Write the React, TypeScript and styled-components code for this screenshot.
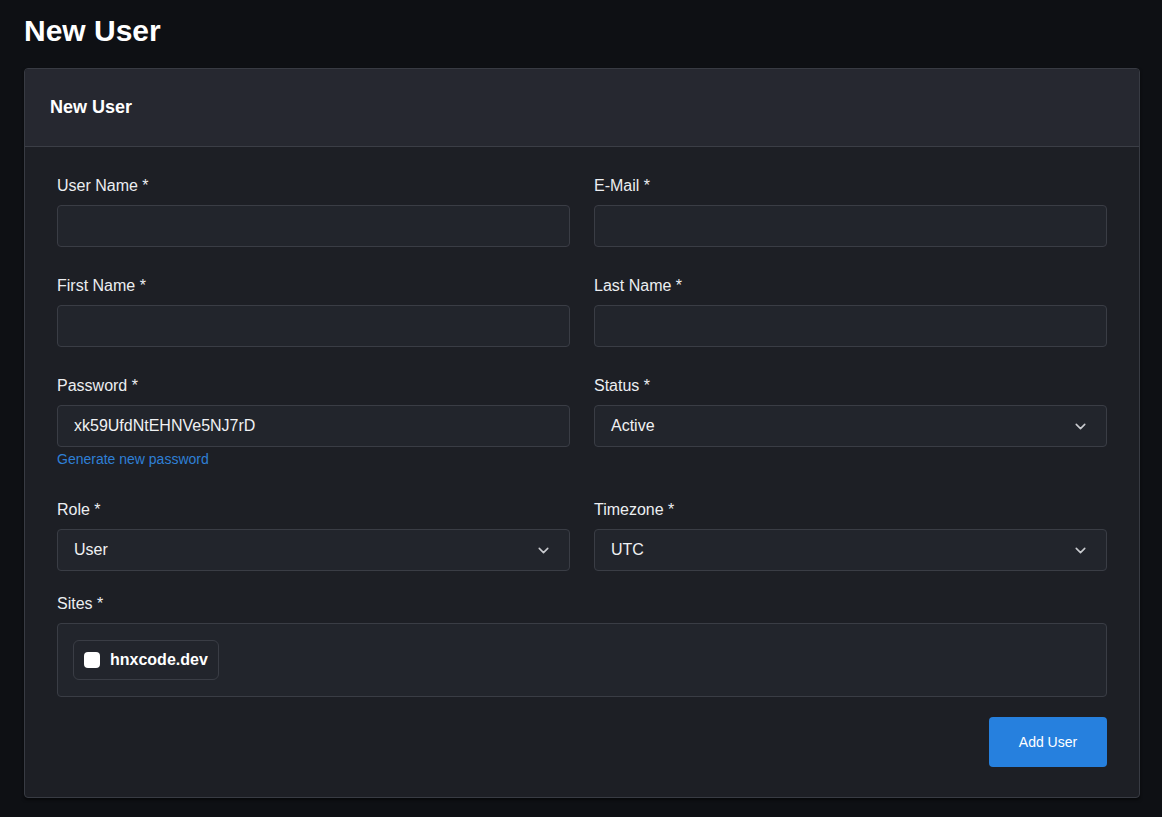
import React, { useState } from "react";
import styled, { createGlobalStyle } from "styled-components";
import { ChevronDown } from "lucide-react";

const GlobalStyle = createGlobalStyle`
  html, body {
    margin: 0;
    padding: 0;
    background: #0e1014;
    font-family: "Liberation Sans", Arial, sans-serif;
    color: #f2f3f5;
  }
  * { box-sizing: border-box; }
`;

const Page = styled.div`
  padding: 14px 22px 20px 24px;
  min-height: 817px;
`;

const Title = styled.h1`
  margin: 0 0 20px;
  font-size: 30px;
  line-height: 34px;
  font-weight: 700;
  color: #ffffff;
`;

const Card = styled.section`
  border: 1px solid #383b43;
  border-radius: 4px;
  background: #1d1f25;
  overflow: hidden;
  box-shadow: 0 2px 3px rgba(0, 0, 0, 0.5);
`;

const CardHeader = styled.header`
  background: #262830;
  border-bottom: 1px solid #3b3e46;
  padding: 27px 25px 28px;
  font-size: 18px;
  line-height: 22px;
  font-weight: 700;
  color: #ffffff;
`;

const CardBody = styled.form`
  padding: 29px 32px 30px;
`;

const Grid = styled.div`
  display: grid;
  grid-template-columns: 1fr 1fr;
  column-gap: 24px;
  row-gap: 29px;
`;

const Field = styled.div<{ $wide?: boolean }>`
  display: flex;
  flex-direction: column;
  grid-column: ${(p) => (p.$wide ? "1 / -1" : "auto")};
`;

const Label = styled.label`
  font-size: 16px;
  line-height: 20px;
  color: #eceef1;
  margin-bottom: 9px;
`;

const Input = styled.input`
  height: 42px;
  width: 100%;
  padding: 0 16px;
  background: #22252c;
  border: 1px solid #3a3d45;
  border-radius: 4px;
  color: #f0f1f3;
  font-family: inherit;
  font-size: 16px;
  outline: none;
`;

const SelectWrap = styled.div`
  position: relative;
  height: 42px;
  background: #22252c;
  border: 1px solid #3a3d45;
  border-radius: 4px;
  display: flex;
  align-items: center;
  padding: 0 16px;
  font-size: 16px;
  color: #f0f1f3;

  & svg {
    position: absolute;
    right: 17px;
    top: 12px;
    color: #c9cbcf;
  }
`;

const HelpLink = styled.a`
  margin-top: 1px;
  font-size: 14px;
  line-height: 23px;
  color: #2f7fd6;
  text-decoration: none;
  cursor: pointer;
`;

const SitesField = styled(Field)`
  margin-top: -6px;
`;

const SitesBox = styled.div`
  border: 1px solid #3a3d45;
  border-radius: 4px;
  background: #22252c;
  padding: 16px 15px 16px;
  display: flex;
  gap: 10px;
`;

const SiteChip = styled.label`
  display: inline-flex;
  align-items: center;
  gap: 10px;
  height: 40px;
  padding: 0 10px 0 10px;
  border: 1px solid #3a3d45;
  border-radius: 6px;
  font-size: 16px;
  font-weight: 700;
  color: #ffffff;
  cursor: pointer;
`;

const Check = styled.span<{ $on: boolean }>`
  width: 16px;
  height: 16px;
  border-radius: 4px;
  background: ${(p) => (p.$on ? "#2680de" : "#ffffff")};
`;

const Actions = styled.div`
  display: flex;
  justify-content: flex-end;
  margin-top: 20px;
`;

const Button = styled.button`
  width: 118px;
  height: 50px;
  border: none;
  border-radius: 4px;
  background: #2680de;
  color: #ffffff;
  font-family: inherit;
  font-size: 14px;
  cursor: pointer;
`;

const Select: React.FC<{ value: string }> = ({ value }) => (
  <SelectWrap>
    {value}
    <ChevronDown size={17} strokeWidth={2.2} />
  </SelectWrap>
);

const App: React.FC = () => {
  const [site, setSite] = useState(false);

  return (
    <>
      <GlobalStyle />
      <Page>
        <Title>New User</Title>
        <Card>
          <CardHeader>New User</CardHeader>
          <CardBody onSubmit={(e) => e.preventDefault()}>
            <Grid>
              <Field>
                <Label>User Name *</Label>
                <Input />
              </Field>
              <Field>
                <Label>E-Mail *</Label>
                <Input />
              </Field>
              <Field>
                <Label>First Name *</Label>
                <Input />
              </Field>
              <Field>
                <Label>Last Name *</Label>
                <Input />
              </Field>
              <Field>
                <Label>Password *</Label>
                <Input defaultValue="xk59UfdNtEHNVe5NJ7rD" />
                <HelpLink>Generate new password</HelpLink>
              </Field>
              <Field>
                <Label>Status *</Label>
                <Select value="Active" />
              </Field>
              <Field>
                <Label>Role *</Label>
                <Select value="User" />
              </Field>
              <Field>
                <Label>Timezone *</Label>
                <Select value="UTC" />
              </Field>
              <SitesField $wide>
                <Label>Sites *</Label>
                <SitesBox>
                  <SiteChip onClick={() => setSite(!site)}>
                    <Check $on={site} />
                    hnxcode.dev
                  </SiteChip>
                </SitesBox>
              </SitesField>
            </Grid>
            <Actions>
              <Button type="submit">Add User</Button>
            </Actions>
          </CardBody>
        </Card>
      </Page>
    </>
  );
};

export default App;
